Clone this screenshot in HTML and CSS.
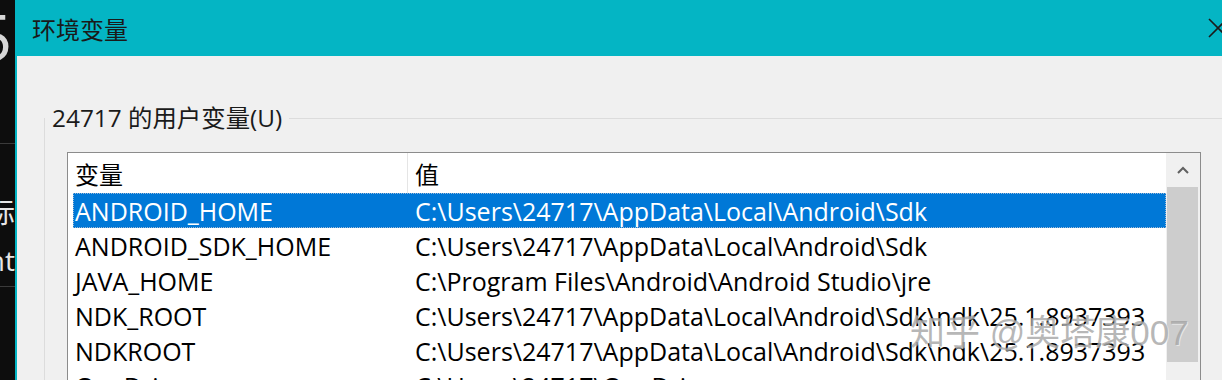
FILE: index.html
```html
<!DOCTYPE html>
<html lang="zh-CN">
<head>
    <meta charset="UTF-8">
    <meta name="viewport" content="width=device-width, initial-scale=1.0">
    <title>环境变量</title>
    <link rel="stylesheet" href="styles.css">
</head>
<body>

<div class="screen">
    <aside class="backdrop">
        <div class="bd-top"><span class="bd-big">5</span></div>
        <div class="bd-mid">
            <span class="bd-glyph">际</span>
            <span class="bd-glyph">nt</span>
        </div>
    </aside>

    <section class="dialog">
        <header class="titlebar">
            <h1 class="title">环境变量</h1>
            <button class="close" type="button">
                <svg width="20" height="20" viewBox="0 0 20 20">
                    <path d="M1 1 L19 19 M19 1 L1 19" stroke="#1b1b1b" stroke-width="1.6" fill="none"/>
                </svg>
            </button>
        </header>

        <div class="dialog-body">
            <fieldset class="group">
                <legend>24717 的用户变量(U)</legend>
                <div class="listview">
                    <div class="list">
                        <div class="row head">
                            <div class="cell name">变量</div>
                            <div class="cell value">值</div>
                        </div>
                        <div class="row selected">
                            <div class="cell name">ANDROID_HOME</div>
                            <div class="cell value">C:\Users\24717\AppData\Local\Android\Sdk</div>
                        </div>
                        <div class="row">
                            <div class="cell name">ANDROID_SDK_HOME</div>
                            <div class="cell value">C:\Users\24717\AppData\Local\Android\Sdk</div>
                        </div>
                        <div class="row">
                            <div class="cell name">JAVA_HOME</div>
                            <div class="cell value">C:\Program Files\Android\Android Studio\jre</div>
                        </div>
                        <div class="row">
                            <div class="cell name">NDK_ROOT</div>
                            <div class="cell value">C:\Users\24717\AppData\Local\Android\Sdk\ndk\25.1.8937393</div>
                        </div>
                        <div class="row">
                            <div class="cell name">NDKROOT</div>
                            <div class="cell value">C:\Users\24717\AppData\Local\Android\Sdk\ndk\25.1.8937393</div>
                        </div>
                        <div class="row">
                            <div class="cell name">OneDrive</div>
                            <div class="cell value">C:\Users\24717\OneDrive</div>
                        </div>
                    </div>
                    <div class="scrollbar">
                        <div class="sb-up">
                            <svg width="12" height="8" viewBox="0 0 12 8">
                                <path d="M1 7 L6 2 L11 7" stroke="#606060" stroke-width="2" fill="none"/>
                            </svg>
                        </div>
                        <div class="sb-thumb"></div>
                    </div>
                </div>
            </fieldset>
        </div>
    </section>

    <div class="watermark">知乎 @奥塔康007</div>
</div>

</body>
</html>
```

FILE: styles.css
```css
body {
    margin: 0;
    background: #0d0d0d;
    font-family: 'Open Sans', 'Noto Sans CJK SC', sans-serif;
    overflow: hidden;
}
.screen {
    position: relative;
    display: flex;
    width: 1222px;
    height: 380px;
    overflow: hidden;
}

/* dark window behind the dialog */
.backdrop {
    width: 15px;
    flex-shrink: 0;
    background: #0d0d0d;
    overflow: hidden;
    display: flex;
    flex-direction: column;
}
.bd-top {
    height: 138px;
    padding-top: 5px;
    border-bottom: 1px solid #3a3a3a;
    display: flex;
    justify-content: flex-end;
}
.bd-big {
    font-size: 64px;
    line-height: 1;
    color: #d6d6d6;
    margin-right: 3px;
}
.bd-mid {
    height: 98px;
    padding-top: 44px;
    border-bottom: 1px solid #3a3a3a;
    display: flex;
    flex-direction: column;
    align-items: flex-end;
}
.bd-glyph {
    font-size: 28px;
    line-height: 48px;
    color: #e6e6e6;
    white-space: nowrap;
}

/* dialog */
.dialog {
    flex: 1;
    display: flex;
    flex-direction: column;
    border-left: 2px solid #04b5c4;
    background: #f0f0f0;
    min-width: 0;
}
.titlebar {
    height: 56px;
    flex-shrink: 0;
    background: #04b5c4;
    display: flex;
    align-items: center;
    justify-content: space-between;
    padding-left: 15px;
}
.title {
    margin: 0;
    font-family: 'Noto Sans CJK SC', sans-serif;
    font-size: 24px;
    font-weight: normal;
    color: #1a1a1a;
}
.close {
    background: none;
    border: none;
    padding: 0;
    margin-right: -6px;
    display: flex;
}
.dialog-body {
    flex: 1;
    padding-top: 47px;
    padding-left: 27px;
}
.group {
    margin: 0;
    width: 1200px;
    padding: 19px 0 0 22px;
    border: 1px solid #dcdcdc;
    border-right: none;
    border-bottom: none;
}
.group legend {
    font-size: 24.4px;
    line-height: 30px;
    color: #1a1a1a;
    padding: 0 7px;
    margin-left: -22px;
}

/* list view */
.listview {
    display: flex;
    width: 1132px;
    height: 260px;
    border: 1px solid #8c8c8c;
    border-bottom: none;
    background: #fff;
}
.list {
    flex: 1;
    padding-left: 5px;
    min-width: 0;
    overflow: hidden;
}
.row {
    display: flex;
    height: 35px;
    align-items: center;
    font-size: 25px;
    color: #000;
    white-space: nowrap;
}
.row.head {
    height: 40px;
    font-size: 24px;
    font-family: 'Noto Sans CJK SC', sans-serif;
}
.row.selected {
    background: #0078d7;
    color: #fff;
    outline: 1px dotted #9fb9d6;
    outline-offset: -1px;
}
.cell.name {
    width: 332px;
    flex-shrink: 0;
    padding-left: 2px;
    height: 100%;
    display: flex;
    align-items: center;
    border-right: 1px solid transparent;
}
.head .cell.name {
    border-right-color: #e5e5e5;
}
.cell.value {
    padding-left: 7px;
}
.scrollbar {
    width: 34px;
    flex-shrink: 0;
    background: #f0f0f0;
    display: flex;
    flex-direction: column;
}
.sb-up {
    height: 34px;
    display: flex;
    align-items: center;
    justify-content: center;
}
.sb-thumb {
    height: 175px;
    margin: 0 2px 0 1px;
    background: #cdcdcd;
}

.watermark {
    position: absolute;
    left: 910px;
    top: 304px;
    font-family: 'Liberation Sans', 'Noto Sans CJK SC', sans-serif;
    font-size: 35px;
    color: rgba(160, 160, 160, 0.75);
    text-shadow: 1px 1px 0 rgba(255, 255, 255, 0.5);
    white-space: nowrap;
}
```
